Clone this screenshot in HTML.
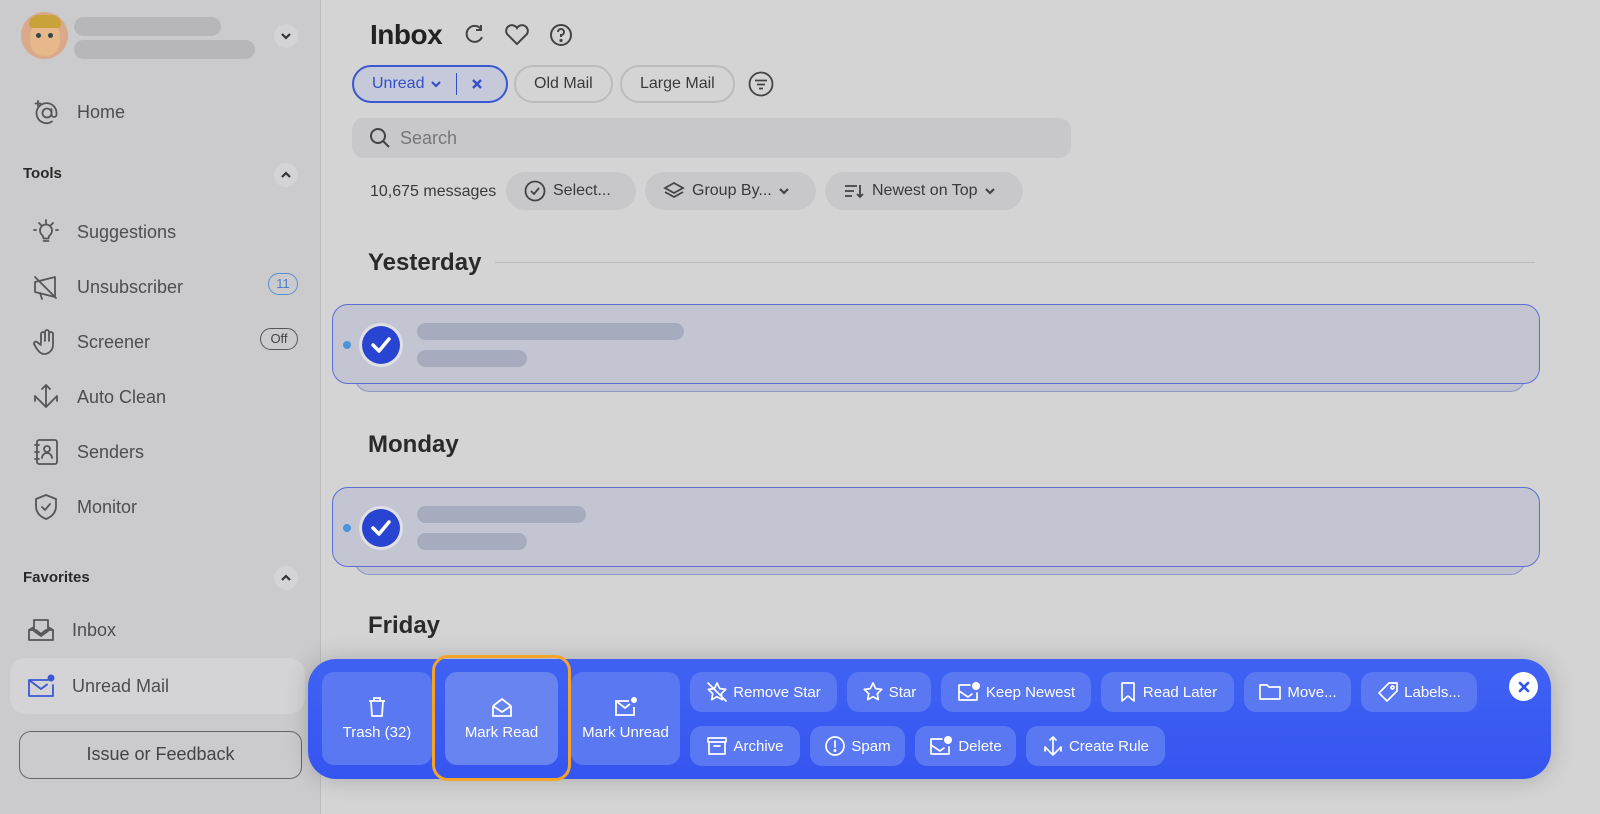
<!DOCTYPE html>
<html><head><meta charset="utf-8">
<style>
*{box-sizing:border-box;margin:0;padding:0}
body{width:1600px;height:814px;overflow:hidden;background:#d4d4d4;font-family:"Liberation Sans",sans-serif;position:relative;color:#333}
.abs{position:absolute}
#side{left:0;top:0;width:321px;height:814px;background:#cbcbcd;border-right:1px solid #bdbdbf}
.nav{position:absolute;left:32px;display:flex;align-items:center;font-size:18px;color:#4d4d52;white-space:nowrap}
.nav svg{width:28px;height:28px;margin-right:17px;stroke:#55555a;fill:none;stroke-width:1.8;stroke-linecap:round;stroke-linejoin:round}
.sec{position:absolute;left:23px;font-size:15px;font-weight:bold;color:#2a2a2a}
.chev{position:absolute;left:274px;width:24px;height:24px;border-radius:12px;background:#d4d4d6;display:flex;align-items:center;justify-content:center}
.pill{border-radius:20px;border:2px solid #bcbcbc;height:38px;display:flex;align-items:center;padding:0 18px;font-size:16px;color:#3a3a3a;position:absolute;white-space:nowrap}
.gb{position:absolute;height:38px;border-radius:19px;background:#c8c8ca;display:flex;align-items:center;font-size:16px;color:#3a3a3a;padding:0 18px;white-space:nowrap}
.gb svg{stroke:#444;fill:none;stroke-width:1.8;margin-right:7px}
.hdr{position:absolute;left:375px;font-size:24px;font-weight:bold;color:#2a2a2a}
.card{position:absolute;left:338px;width:1202px;height:80px;border:1.5px solid #5d6fd0;border-radius:16px;background:#c3c5d3}
.under{position:absolute;left:354px;width:1172px;height:80px;border:1.5px solid #8d96c6;border-radius:16px;background:#c0c2cf}
.bar{position:absolute;border-radius:10px;background:#a6abbe}
.chk{position:absolute;left:26px;top:18px;width:44px;height:44px;border-radius:22px;background:#e0e0e4;display:flex;align-items:center;justify-content:center}
.chk div{width:38px;height:38px;border-radius:19px;background:#2a44d2;display:flex;align-items:center;justify-content:center}
.dot{position:absolute;left:10px;top:36px;width:8px;height:8px;border-radius:4px;background:#4a94d8}
#abar{left:308px;top:659px;width:1243px;height:120px;border-radius:28px;background:linear-gradient(#3f62f4,#3655f0);box-shadow:0 0 24px rgba(0,0,0,.2)}
.big{position:absolute;top:672px;height:93px;border-radius:12px;background:#5978f2;color:#fff;font-size:15px;display:flex;flex-direction:column;align-items:center;justify-content:center;white-space:nowrap}
.big svg{stroke:#fff;fill:none;stroke-width:1.8;margin-bottom:6px}
.sm{position:absolute;height:40px;border-radius:12px;background:#5978f2;color:#fff;font-size:15px;display:flex;align-items:center;justify-content:center;padding:0 6px;white-space:nowrap}
.sm svg{stroke:#fff;fill:none;stroke-width:1.7;margin-right:5px;stroke-linecap:round;stroke-linejoin:round;flex:none}
</style></head><body>
<div id="side" class="abs">
  <div class="abs" style="left:21px;top:12px;width:47px;height:47px;border-radius:24px;background:#d9a98a;overflow:hidden">
    <div class="abs" style="left:9px;top:10px;width:30px;height:34px;border-radius:14px;background:#e7b889"></div>
    <div class="abs" style="left:8px;top:3px;width:32px;height:13px;border-radius:10px 10px 4px 4px;background:#c9a23a"></div>
    <div class="abs" style="left:15px;top:21px;width:5px;height:5px;border-radius:3px;background:#345"></div>
    <div class="abs" style="left:27px;top:21px;width:5px;height:5px;border-radius:3px;background:#345"></div>
  </div>
  <div class="abs" style="left:74px;top:17px;width:147px;height:19px;border-radius:10px;background:#b7b7b9"></div>
  <div class="abs" style="left:74px;top:40px;width:181px;height:19px;border-radius:10px;background:#b7b7b9"></div>
  <div class="chev" style="top:24px"><svg width="12" height="8" viewBox="0 0 12 8"><path d="M2 2l4 4 4-4" stroke="#333" stroke-width="2.2" fill="none"/></svg></div>

  <div class="nav" style="top:98px"><svg viewBox="0 0 28 28"><circle cx="15" cy="15" r="4.5"/><path d="M19.5 11v5.5a2.5 2.5 0 0 0 5 0V15A10 10 0 1 0 20 23.5"/><path d="M6 3v5M3.5 5.5h5"/></svg>Home</div>
  <div class="sec" style="top:165px">Tools</div>
  <div class="chev" style="top:163px"><svg width="12" height="8" viewBox="0 0 12 8"><path d="M2 6l4-4 4 4" stroke="#333" stroke-width="2.2" fill="none"/></svg></div>
  <div class="nav" style="top:218px"><svg viewBox="0 0 28 28"><path d="M10 17a6 6 0 1 1 8 0c-1 1-1.5 2-1.5 3.5h-5C11.5 19 11 18 10 17zM11.5 23h5M14 2v3M4 12H2M26 12h-2M7 5l2 2M21 5l-2 2"/></svg>Suggestions</div>
  <div class="nav" style="top:273px"><svg viewBox="0 0 28 28"><path d="M3 9l20-5v20L3 19zM3 9v10M8 20l2 6M3 4l21 21"/></svg>Unsubscriber</div>
  <div class="abs" style="left:268px;top:273px;width:30px;height:22px;border:1.5px solid #5a8ed0;border-radius:11px;font-size:13px;color:#4c7fc4;text-align:center;line-height:19px">11</div>
  <div class="nav" style="top:328px"><svg viewBox="0 0 28 28"><path d="M9 15V6a2 2 0 0 1 4 0v7V4a2 2 0 0 1 4 0v9V6a2 2 0 0 1 4 0v11a9 9 0 0 1-9 9c-3 0-5-2-7-5l-3-5a2 2 0 0 1 3-2l4 3"/></svg>Screener</div>
  <div class="abs" style="left:260px;top:328px;width:38px;height:22px;border:1.5px solid #555;border-radius:11px;font-size:13px;color:#444;text-align:center;line-height:19px">Off</div>
  <div class="nav" style="top:383px"><svg viewBox="0 0 28 28"><path d="M14 2v22M10 6l4-4 4 4M3 13l11 11 11-11M3 13v5M25 13v5"/></svg>Auto Clean</div>
  <div class="nav" style="top:438px"><svg viewBox="0 0 28 28"><rect x="5" y="2" width="20" height="24" rx="2"/><circle cx="15" cy="11" r="3"/><path d="M10 20a5 5 0 0 1 10 0M3 7h4M3 14h4M3 21h4"/></svg>Senders</div>
  <div class="nav" style="top:493px"><svg viewBox="0 0 28 28"><path d="M14 2l10 4v7c0 7-5 11-10 13C9 24 4 20 4 13V6z"/><path d="M10 14l3 3 5-6"/></svg>Monitor</div>
  <div class="sec" style="top:569px">Favorites</div>
  <div class="chev" style="top:566px"><svg width="12" height="8" viewBox="0 0 12 8"><path d="M2 6l4-4 4 4" stroke="#333" stroke-width="2.2" fill="none"/></svg></div>
  <div class="nav" style="top:616px;left:26px"><svg viewBox="0 0 30 28" style="width:30px;margin-right:16px"><path d="M3 14v10h24V14M3 14l5-3M27 14l-5-3M8 4h14v11l-7 5-7-5z"/><path d="M3 14h7l5 4 5-4h7"/></svg>Inbox</div>
  <div class="abs" style="left:10px;top:658px;width:295px;height:56px;border-radius:16px;background:#d4d4d6"></div>
  <div class="nav" style="top:672px;left:26px"><svg viewBox="0 0 30 28" style="width:30px;margin-right:16px;stroke:#3b57d6"><path d="M22 8H3v16h24V13M3 8l12 9 6-4.5"/><circle cx="25" cy="6" r="3.5" fill="#3b57d6" stroke="none"/></svg>Unread Mail</div>
  <div class="abs" style="left:19px;top:731px;width:283px;height:48px;border:1.5px solid #666;border-radius:12px;font-size:18px;color:#444;text-align:center;line-height:45px">Issue or Feedback</div>
</div>

<div class="abs" style="left:370px;top:19px;font-size:28px;font-weight:bold;color:#222;letter-spacing:-0.5px">Inbox</div>
<svg class="abs" style="left:463px;top:23px" width="24" height="24" viewBox="0 0 24 24" fill="none" stroke="#444" stroke-width="2"><path d="M18 6a8 8 0 1 0 1 8"/><path d="M18 2v5h-5"/></svg>
<svg class="abs" style="left:504px;top:23px" width="26" height="24" viewBox="0 0 26 24" fill="none" stroke="#444" stroke-width="2"><path d="M13 21L3 11a5.5 5.5 0 0 1 10-6 5.5 5.5 0 0 1 10 6z"/></svg>
<svg class="abs" style="left:549px;top:23px" width="24" height="24" viewBox="0 0 24 24" fill="none" stroke="#444" stroke-width="2"><circle cx="12" cy="12" r="10"/><path d="M9 9a3 3 0 1 1 3 3v2"/><circle cx="12" cy="17.5" r=".6" fill="#444"/></svg>

<div class="pill" style="left:352px;top:65px;width:156px;border-color:#3a56d0;background:#c6c9da;color:#3350c8;padding:0 18px">Unread <svg width="12" height="8" viewBox="0 0 12 8" style="margin-left:6px"><path d="M2 2l4 4 4-4" stroke="#3350c8" stroke-width="2.2" fill="none"/></svg><span style="width:1px;height:22px;background:#3350c8;margin:0 14px"></span><svg width="12" height="12" viewBox="0 0 12 12"><path d="M2 2l8 8M10 2l-8 8" stroke="#3350c8" stroke-width="2.4"/></svg></div>
<div class="pill" style="left:514px;top:65px">Old Mail</div>
<div class="pill" style="left:620px;top:65px">Large Mail</div>
<svg class="abs" style="left:748px;top:71px" width="26" height="26" viewBox="0 0 26 26" fill="none" stroke="#444" stroke-width="1.8"><circle cx="13" cy="13" r="11.5"/><path d="M7 9.5h12M9 13.5h8M11 17.5h4"/></svg>

<div class="abs" style="left:352px;top:118px;width:719px;height:40px;border-radius:12px;background:#c8c8ca"></div>
<svg class="abs" style="left:369px;top:127px" width="22" height="22" viewBox="0 0 22 22" fill="none" stroke="#444" stroke-width="2"><circle cx="9" cy="9" r="7"/><path d="M14 14l6 6"/></svg>
<div class="abs" style="left:400px;top:128px;font-size:18px;color:#777">Search</div>

<div class="abs" style="left:370px;top:183px;font-size:16px;color:#3a3a3a">10,675 messages</div>
<div class="gb" style="left:506px;top:172px;width:130px"><svg width="22" height="22" viewBox="0 0 22 22"><circle cx="11" cy="11" r="9.5"/><path d="M7 11l3 3 5-6"/></svg>Select...</div>
<div class="gb" style="left:645px;top:172px;width:171px"><svg width="22" height="22" viewBox="0 0 22 22"><path d="M11 3l9 5-9 5-9-5z"/><path d="M2 12l9 5 9-5"/></svg>Group By... <svg width="12" height="8" viewBox="0 0 12 8" style="margin:0 0 0 6px"><path d="M2 2l4 4 4-4" stroke-width="2.2"/></svg></div>
<div class="gb" style="left:825px;top:172px;width:198px"><svg width="22" height="20" viewBox="0 0 22 20"><path d="M2 5h12M2 10h9M2 15h7M17 4v12M14 13l3 3 3-3"/></svg>Newest on Top <svg width="12" height="8" viewBox="0 0 12 8" style="margin:0 0 0 6px"><path d="M2 2l4 4 4-4" stroke-width="2.2"/></svg></div>

<div class="hdr" style="top:249px;left:368px">Yesterday</div>
<div class="abs" style="left:495px;top:262px;width:1040px;height:1px;background:#bcbcbc"></div>
<div class="under" style="top:312px"></div>
<div class="card" style="top:304px;left:332px;width:1208px">
  <div class="dot"></div><div class="chk"><div><svg width="22" height="18" viewBox="0 0 22 18"><path d="M3 9l6 6 10-12" stroke="#fff" stroke-width="3.5" fill="none" stroke-linecap="round" stroke-linejoin="round"/></svg></div></div>
  <div class="bar" style="left:84px;top:18px;width:267px;height:17px"></div>
  <div class="bar" style="left:84px;top:45px;width:110px;height:17px"></div>
</div>

<div class="hdr" style="top:431px;left:368px">Monday</div>
<div class="under" style="top:495px"></div>
<div class="card" style="top:487px;left:332px;width:1208px">
  <div class="dot"></div><div class="chk"><div><svg width="22" height="18" viewBox="0 0 22 18"><path d="M3 9l6 6 10-12" stroke="#fff" stroke-width="3.5" fill="none" stroke-linecap="round" stroke-linejoin="round"/></svg></div></div>
  <div class="bar" style="left:84px;top:18px;width:169px;height:17px"></div>
  <div class="bar" style="left:84px;top:45px;width:110px;height:17px"></div>
</div>
<div class="hdr" style="top:612px;left:368px">Friday</div>

<div id="abar" class="abs"></div>
<div class="big" style="left:322px;width:110px"><svg width="20" height="22" viewBox="0 0 20 22"><path d="M2 5h16M7 5V2h6v3M4 5l1 15h10l1-15"/></svg>Trash (32)</div>
<div class="big" style="left:445px;width:113px;background:#6884f0"><svg width="22" height="22" viewBox="0 0 22 22"><path d="M2 10v10h18V10M2 10l9-7 9 7M2 10l9 6 9-6"/></svg>Mark Read</div>
<div class="abs" style="left:432px;top:655px;width:139px;height:126px;border:3px solid #f3a42a;border-radius:16px"></div>
<div class="big" style="left:571px;width:109px"><svg width="24" height="22" viewBox="0 0 24 22"><path d="M15 5H2v14h18v-8M2 5l9 7 5-4"/><circle cx="20" cy="4" r="3" fill="#fff" stroke="none"/></svg>Mark Unread</div>

<div class="sm" style="left:690px;top:672px;width:147px"><svg width="22" height="22" viewBox="0 0 22 22"><path d="M11 2l2.7 5.6 6 .8-4.4 4.2 1 6L11 15.7 5.7 18.6l1-6L2.3 8.4l6-.8zM2 2l18 18"/></svg>Remove Star</div>
<div class="sm" style="left:847px;top:672px;width:84px"><svg width="22" height="22" viewBox="0 0 22 22"><path d="M11 2l2.7 5.6 6 .8-4.4 4.2 1 6L11 15.7 5.7 18.6l1-6L2.3 8.4l6-.8z"/></svg>Star</div>
<div class="sm" style="left:941px;top:672px;width:150px"><svg width="24" height="22" viewBox="0 0 24 22"><path d="M13 4H2v15h18v-7M2 10l9 6 4-3"/><circle cx="19" cy="5" r="4" fill="#fff" stroke="none"/></svg>Keep Newest</div>
<div class="sm" style="left:1101px;top:672px;width:133px"><svg width="20" height="22" viewBox="0 0 20 22"><path d="M4 2h12v18l-6-5-6 5z"/></svg>Read Later</div>
<div class="sm" style="left:1244px;top:672px;width:107px"><svg width="24" height="20" viewBox="0 0 24 20"><path d="M2 3h7l2 2h11v12H2z"/></svg>Move...</div>
<div class="sm" style="left:1361px;top:672px;width:116px"><svg width="22" height="22" viewBox="0 0 22 22"><path d="M12 2h8v8l-10 10-8-8z"/><circle cx="15.5" cy="6.5" r="1.5"/></svg>Labels...</div>
<div class="abs" style="left:1509px;top:672px;width:29px;height:29px;border-radius:15px;background:#fff;display:flex;align-items:center;justify-content:center"><svg width="12" height="12" viewBox="0 0 12 12"><path d="M2 2l8 8M10 2l-8 8" stroke="#3355ee" stroke-width="2.6" stroke-linecap="round"/></svg></div>

<div class="sm" style="left:690px;top:726px;width:110px"><svg width="22" height="22" viewBox="0 0 22 22"><path d="M2 3h18v4H2zM3 7v12h16V7M8 11h6"/></svg>Archive</div>
<div class="sm" style="left:810px;top:726px;width:95px"><svg width="22" height="22" viewBox="0 0 22 22"><circle cx="11" cy="11" r="9"/><path d="M11 6v6"/><circle cx="11" cy="15.5" r=".6" fill="#fff"/></svg>Spam</div>
<div class="sm" style="left:915px;top:726px;width:101px"><svg width="24" height="22" viewBox="0 0 24 22"><path d="M13 4H2v15h18v-7M2 10l9 6 4-3"/><circle cx="19" cy="5" r="4" fill="#fff" stroke="none"/></svg>Delete</div>
<div class="sm" style="left:1026px;top:726px;width:139px"><svg width="22" height="22" viewBox="0 0 22 22"><path d="M11 2v18M8 5l3-3 3 3M3 12l8 8 8-8M3 12v4M19 12v4"/></svg>Create Rule</div>
</body></html>
